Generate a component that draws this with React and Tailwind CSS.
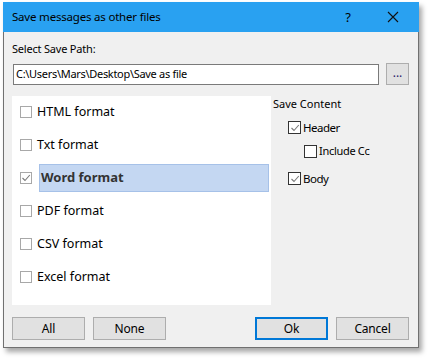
import React from 'react';

const Check = ({ checked, dark, size = 12 }) => (
    <span
        className={`flex items-center justify-center shrink-0 bg-white border ${dark ? 'border-[#333333]' : 'border-[#a8a8a8]'}`}
        style={{ width: size, height: size }}
    >
        {checked && (
            <svg width="10" height="10" viewBox="0 0 10 10" fill="none">
                <path d="M1.5 5 L4 7.5 L8.8 2" stroke="#7a7a7a" strokeWidth="1.1" />
            </svg>
        )}
    </span>
);

const formats = [
    { name: 'HTML format' },
    { name: 'Txt format' },
    { name: 'Word format', checked: true, selected: true },
    { name: 'PDF format' },
    { name: 'CSV format' },
    { name: 'Excel format' },
];

const Button = ({ children, primary, className = '' }) => (
    <button
        className={`h-[23px] w-[73px] flex items-center justify-center bg-[#e1e1e1] text-[12px] tracking-[-0.2px] text-black ${primary ? 'border-2 border-[#0078d7]' : 'border border-[#adadad]'} ${className}`}
    >
        {children}
    </button>
);

export default function App() {
    return (
        <div className="w-[428px] h-[359px] bg-white font-['Noto_Sans',sans-serif] text-black">
            <div className="ml-[3px] mt-[2px] w-[416px] h-[346px] flex flex-col bg-[#f0f0f0] border border-t-0 border-[#707070] shadow-[3px_4px_5px_rgba(0,0,0,0.35)]">
                {/* title bar */}
                <div className="h-[30px] -mx-px bg-[#29a1f1] flex items-center pl-[9px] shrink-0">
                    <span className="text-[11.5px] tracking-[-0.2px] leading-none">Save messages as other files</span>
                    <span className="ml-auto text-[13px] leading-none mr-[36px]">?</span>
                    <svg width="12" height="12" viewBox="0 0 12 12" className="mr-[20px]">
                        <path d="M1 1 L11 11 M11 1 L1 11" stroke="#111" strokeWidth="1.1" />
                    </svg>
                </div>

                <div className="flex flex-col pl-[8px] pr-[9px]">
                    <div className="mt-[9px] h-[16px] text-[11px] tracking-[-0.2px] leading-[16px]">Select Save Path:</div>

                    <div className="mt-[6px] flex items-center">
                        <div className="h-[21px] w-[366px] ml-px bg-white border border-[#7a7a7a] flex items-center pl-[2px] text-[11px] tracking-[-0.3px]">
                            C:\Users\Mars\Desktop\Save as file
                        </div>
                        <div className="ml-auto h-[22px] w-[23px] bg-[#e1e1e1] border border-[#adadad] flex items-center justify-center text-[12px] leading-none pb-[2px] text-[#2a1a6a]">
                            ...
                        </div>
                    </div>

                    <div className="mt-[11px] flex h-[209px]">
                        <div className="w-[259px] bg-white flex flex-col pt-[2px] gap-[5px]">
                            {formats.map((f) => (
                                <div key={f.name} className="h-[28px] flex items-center pl-[8px] pr-[2px]">
                                    <Check checked={f.checked} />
                                    {f.selected ? (
                                        <div className="ml-[7px] flex-1 h-[28px] bg-[#c4d7f2] border border-[#a6c1e8] flex items-center pl-px text-[13px] font-bold text-[#333333]">
                                            {f.name}
                                        </div>
                                    ) : (
                                        <span className="ml-[5px] text-[12.5px]">{f.name}</span>
                                    )}
                                </div>
                            ))}
                        </div>

                        <div className="flex flex-col pl-[2px]">
                            <div className="h-[16px] leading-[16px] text-[11px]">Save Content</div>
                            <div className="mt-[9px] ml-[15px] flex items-center h-[13px]">
                                <Check checked dark size={13} />
                                <span className="ml-[2px] text-[11.5px] tracking-[-0.5px]">Header</span>
                            </div>
                            <div className="mt-[11px] ml-[31px] flex items-center h-[13px]">
                                <Check dark size={13} />
                                <span className="ml-[2px] text-[11px] tracking-[-0.3px]">Include Cc</span>
                            </div>
                            <div className="mt-[14px] ml-[15px] flex items-center h-[13px]">
                                <Check checked dark size={13} />
                                <span className="ml-[2px] text-[11.5px] tracking-[-0.5px]">Body</span>
                            </div>
                        </div>
                    </div>

                    <div className="mt-[12px] flex items-center">
                        <Button>All</Button>
                        <Button className="ml-[8px]">None</Button>
                        <Button primary className="ml-auto">Ok</Button>
                        <Button className="ml-[8px]">Cancel</Button>
                    </div>
                </div>
            </div>
        </div>
    );
}
